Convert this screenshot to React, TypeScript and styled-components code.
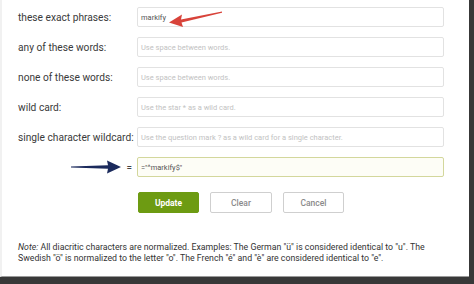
import React from 'react';
import styled, { createGlobalStyle } from 'styled-components';

const GlobalStyle = createGlobalStyle`
  html, body {
    margin: 0;
    padding: 0;
    background: #3a3a3a;
    font-family: Roboto, "Liberation Sans", Arial, sans-serif;
  }
`;

const Backdrop = styled.div`
  width: 474px;
  height: 284px;
  background: #383838;
  overflow: hidden;
`;

const Dialog = styled.div`
  width: 469px;
  height: 277px;
  background: #fff;
  border-left: 2px solid #f1f1f1;
  box-sizing: border-box;
  border-bottom: 1px solid #9a9a9a;
  display: flex;
  flex-direction: column;
  padding-top: 7px;
`;

const Form = styled.div`
  display: grid;
  grid-template-columns: 135px 307px;
  row-gap: 10px;
`;

const Label = styled.div`
  height: 20px;
  display: flex;
  align-items: center;
  padding-left: 16px;
  font-size: 10.2px;
  color: #3a3a3a;
  white-space: nowrap;
`;

const EqualsCell = styled.div`
  height: 20px;
  display: flex;
  align-items: center;
  justify-content: flex-end;
  padding-right: 5px;
  gap: 6px;
  font-size: 10px;
  color: #444;
`;

const InputWrap = styled.div`
  position: relative;
`;

const Input = styled.div<{ $active?: boolean }>`
  height: 20px;
  box-sizing: border-box;
  border: 1px solid ${(p) => (p.$active ? '#d3d79c' : '#e2e2e2')};
  background: ${(p) => (p.$active ? '#fdfdf6' : '#fff')};
  border-radius: 2px;
  display: flex;
  align-items: center;
  padding-left: 3px;
  font-size: 7.5px;
  color: #555;
  white-space: nowrap;
  overflow: hidden;
`;

const Placeholder = styled.span`
  color: #c2c2c2;
`;

const RedArrow = styled.svg`
  position: absolute;
  left: 32px;
  top: 4px;
`;

const Buttons = styled.div`
  display: flex;
  gap: 11px;
  margin-top: 15px;
  padding-left: 136px;
`;

const Button = styled.button<{ $primary?: boolean; $w: number }>`
  width: ${(p) => p.$w}px;
  height: 21px;
  box-sizing: border-box;
  border-radius: 2px;
  font-family: inherit;
  font-size: 8.5px;
  font-weight: ${(p) => (p.$primary ? 700 : 500)};
  color: ${(p) => (p.$primary ? '#fff' : '#8a8a8a')};
  background: ${(p) => (p.$primary ? '#6d9b12' : '#fff')};
  border: 1px solid ${(p) => (p.$primary ? '#6d9b12' : '#cfcfcf')};
  padding: 0;
`;

const Note = styled.p`
  margin: 29px 0 0 0;
  padding-left: 16px;
  width: 430px;
  font-size: 8.75px;
  line-height: 10.5px;
  color: #333;
`;

const rows = [
  { label: 'these exact phrases:', value: 'markify' },
  { label: 'any of these words:', placeholder: 'Use space between words.' },
  { label: 'none of these words:', placeholder: 'Use space between words.' },
  { label: 'wild card:', placeholder: 'Use the star * as a wild card.' },
  {
    label: 'single character wildcard:',
    placeholder: 'Use the question mark ? as a wild card for a single character.',
  },
];

export default function App() {
  return (
    <Backdrop>
      <GlobalStyle />
      <Dialog>
        <Form>
          {rows.map((r, i) => (
            <React.Fragment key={r.label}>
              <Label>{r.label}</Label>
              <InputWrap>
                <Input>
                  {r.value ? r.value : <Placeholder>{r.placeholder}</Placeholder>}
                </Input>
                {i === 0 && (
                  <RedArrow width="54" height="16" viewBox="0 0 54 16">
                    <path d="M0 11.5 L13 3.5 L12 8.5 L53 0.5 L53 1.8 L12.5 11.5 L14 16 Z" fill="#d8433a" />
                  </RedArrow>
                )}
              </InputWrap>
            </React.Fragment>
          ))}
          <EqualsCell>
            <svg width="50" height="14" viewBox="0 0 50 14">
              <path d="M0 6.5 L37 5.2 L36 0.5 L50 7 L36 13.5 L37 8.8 L0 7.5 Z" fill="#1b2a5c" />
            </svg>
            <span>=</span>
          </EqualsCell>
          <InputWrap>
            <Input $active>="^markify$"</Input>
          </InputWrap>
        </Form>
        <Buttons>
          <Button $primary $w={61}>Update</Button>
          <Button $w={62}>Clear</Button>
          <Button $w={61}>Cancel</Button>
        </Buttons>
        <Note>
          <i>Note:</i> All diacritic characters are normalized. Examples: The German "ü" is considered
          identical to "u". The Swedish "ö" is normalized to the letter "o". The French "é" and "è" are
          considered identical to "e".
        </Note>
      </Dialog>
    </Backdrop>
  );
}
